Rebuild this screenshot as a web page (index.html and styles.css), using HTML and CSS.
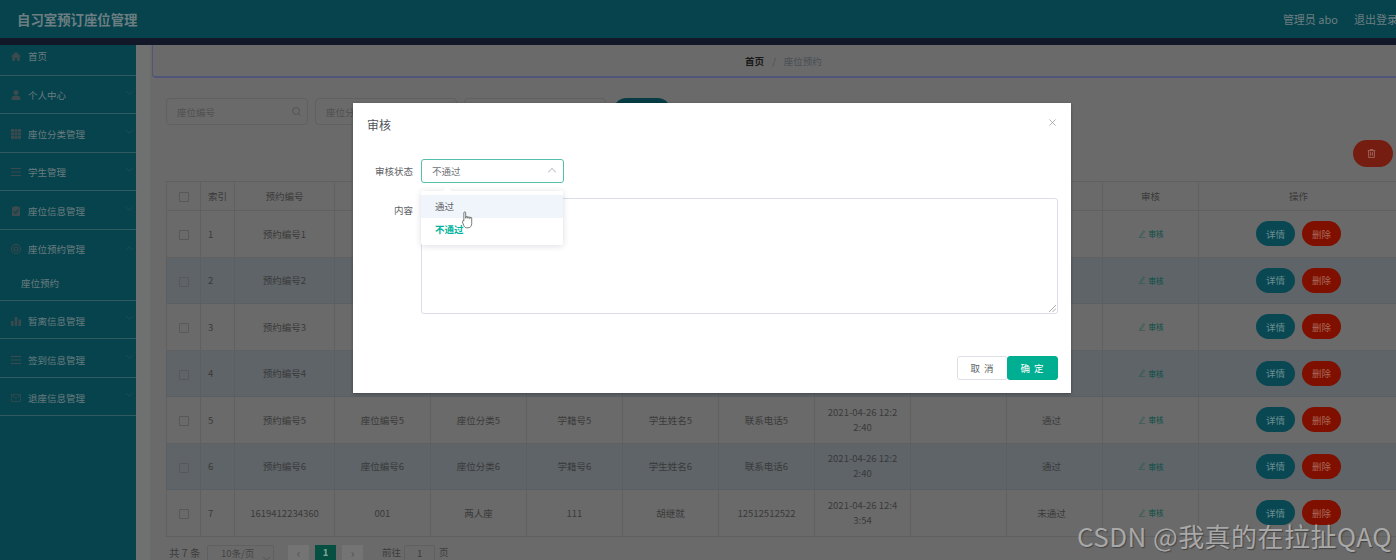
FILE: index.html
```html
<!DOCTYPE html>
<html lang="zh-CN">
<head>
    <meta charset="UTF-8">
    <title>自习室预订座位管理</title>
    <link rel="stylesheet" href="styles.css">
</head>
<body>
    <header class="top">
        <span class="brand">自习室预订座位管理</span>
        <div class="top-right">
            <span>管理员 abo</span>
            <span>退出登录</span>
        </div>
    </header>
    <div class="strip"></div>

    <div class="wrap">
        <nav class="side">
            <div class="item first">
                <svg class="ico" viewBox="0 0 10 10"><path d="M5 .8 0 5.400h1.300V10h2.600V7h2.200v3h2.600V5.400H10z"/></svg>
                首页
            </div>
            <div class="item">
                <svg class="ico" viewBox="0 0 10 10"><circle cx="5" cy="2.600" r="2.500"/><path d="M.6 10V8c0-1.800 1.800-2.600 4.400-2.600S9.400 6.200 9.400 8v2z"/></svg>
                个人中心<i class="chev"></i>
            </div>
            <div class="item">
                <svg class="ico" viewBox="0 0 10 10"><path d="M0 0h3v3H0zM3.500 0h3v3h-3zM7 0h3v3H7zM0 3.500h3v3H0zM3.500 3.500h3v3h-3zM7 3.500h3v3H7zM0 7h3v3H0zM3.500 7h3v3h-3zM7 7h3v3H7z"/></svg>
                座位分类管理<i class="chev"></i>
            </div>
            <div class="item">
                <svg class="ico" viewBox="0 0 10 10"><path d="M0 1h10v1H0zM0 4.500h10v1H0zM0 8h10v1H0z"/></svg>
                学生管理<i class="chev"></i>
            </div>
            <div class="item">
                <svg class="ico" viewBox="0 0 10 10"><path d="M1 1h2.500V0h3v1H9v9H1zM3 5l-.7.7L4.300 7.800l3.500-3.500-.7-.7-2.800 2.800z"/></svg>
                座位信息管理<i class="chev"></i>
            </div>
            <div class="item open">
                <svg class="ico" viewBox="0 0 10 10"><path fill-rule="evenodd" d="M5 0a5 5 0 1 1 0 10A5 5 0 0 1 5 0zm0 1a4 4 0 1 0 0 8 4 4 0 0 0 0-8zm0 1.500a2.500 2.500 0 1 1 0 5 2.500 2.500 0 0 1 0-5zm0 1a1.500 1.500 0 1 0 0 3 1.500 1.500 0 0 0 0-3z"/></svg>
                座位预约管理<i class="chev up"></i>
            </div>
            <div class="item sub">座位预约</div>
            <div class="item">
                <svg class="ico" viewBox="0 0 10 10"><path d="M0 5h2.500v5H0zM3.700 1h2.600v9H3.700zM7.500 3.500H10V10H7.500z"/></svg>
                暂离信息管理<i class="chev"></i>
            </div>
            <div class="item">
                <svg class="ico" viewBox="0 0 10 10"><path d="M0 1h10v1H0zM0 4.500h10v1H0zM0 8h10v1H0z"/></svg>
                签到信息管理<i class="chev"></i>
            </div>
            <div class="item">
                <svg class="ico" viewBox="0 0 10 10"><path fill="none" stroke="#3a4a4e" stroke-width=".8" d="M.4 1.400h9.200v7.200H.4zM.6 1.800 5 5.500l4.400-3.700"/></svg>
                退座信息管理<i class="chev"></i>
            </div>
        </nav>

        <main class="content">
            <div class="crumb">
                <b>首页</b><span class="sep">/</span><span class="cur">座位预约</span>
            </div>

            <div class="search">
                <div class="field">座位编号
                    <svg class="mag" viewBox="0 0 10 10"><circle cx="4.500" cy="4.500" r="3.800"/><path d="m7.300 7.300 2.200 2.200"/></svg>
                </div>
                <div class="field">座位分类</div>
                <div class="field">学籍号</div>
                <div class="find"></div>
            </div>

            <div class="tools">
                <button class="trash">
                    <svg viewBox="0 0 10 10"><path d="M.8 1.800h8.400M3.500 1.800V.6h3v1.200M1.800 1.800v7.600h6.400V1.800M4 3.500v4M6 3.500v4"/></svg>
                </button>
            </div>

            <table class="grid">
                <colgroup>
                    <col class="c-check"><col class="c-index"><col class="c-first"><col class="c-n"><col class="c-n"><col class="c-n">
                    <col class="c-n"><col class="c-n"><col class="c-n"><col class="c-n"><col class="c-n"><col class="c-n"><col class="c-op">
                </colgroup>
                <thead>
                    <tr>
                        <th><i class="box"></i></th><th class="idx">索引</th><th>预约编号</th><th>座位编号</th><th>座位分类</th><th>学籍号</th>
                        <th>学生姓名</th><th>联系电话</th><th>预约时间</th><th>审核回复</th><th class="state">审核状态</th><th>审核</th><th>操作</th>
                    </tr>
                </thead>
                <tbody>
                    <tr>
                        <td><i class="box"></i></td><td class="idx">1</td><td>预约编号1</td><td>座位编号1</td><td>座位分类1</td><td>学籍号1</td>
                        <td>学生姓名1</td><td>联系电话1</td><td class="time">2021-04-26 12:22:40</td><td></td><td class="state">通过</td>
                        <td><a class="check"><svg viewBox="0 0 10 10"><path d="M7 .8 3 6.500 2.500 8.500 4.300 7.500 8.200 2zM1 9.500h8"/></svg>审核</a></td>
                        <td><button class="pill view">详情</button><button class="pill del">删除</button></td>
                    </tr>
                    <tr>
                        <td><i class="box"></i></td><td class="idx">2</td><td>预约编号2</td><td>座位编号2</td><td>座位分类2</td><td>学籍号2</td>
                        <td>学生姓名2</td><td>联系电话2</td><td class="time">2021-04-26 12:22:40</td><td></td><td class="state">通过</td>
                        <td><a class="check"><svg viewBox="0 0 10 10"><path d="M7 .8 3 6.500 2.500 8.500 4.300 7.500 8.200 2zM1 9.500h8"/></svg>审核</a></td>
                        <td><button class="pill view">详情</button><button class="pill del">删除</button></td>
                    </tr>
                    <tr>
                        <td><i class="box"></i></td><td class="idx">3</td><td>预约编号3</td><td>座位编号3</td><td>座位分类3</td><td>学籍号3</td>
                        <td>学生姓名3</td><td>联系电话3</td><td class="time">2021-04-26 12:22:40</td><td></td><td class="state">通过</td>
                        <td><a class="check"><svg viewBox="0 0 10 10"><path d="M7 .8 3 6.500 2.500 8.500 4.300 7.500 8.200 2zM1 9.500h8"/></svg>审核</a></td>
                        <td><button class="pill view">详情</button><button class="pill del">删除</button></td>
                    </tr>
                    <tr>
                        <td><i class="box"></i></td><td class="idx">4</td><td>预约编号4</td><td>座位编号4</td><td>座位分类4</td><td>学籍号4</td>
                        <td>学生姓名4</td><td>联系电话4</td><td class="time">2021-04-26 12:22:40</td><td></td><td class="state">通过</td>
                        <td><a class="check"><svg viewBox="0 0 10 10"><path d="M7 .8 3 6.500 2.500 8.500 4.300 7.500 8.200 2zM1 9.500h8"/></svg>审核</a></td>
                        <td><button class="pill view">详情</button><button class="pill del">删除</button></td>
                    </tr>
                    <tr>
                        <td><i class="box"></i></td><td class="idx">5</td><td>预约编号5</td><td>座位编号5</td><td>座位分类5</td><td>学籍号5</td>
                        <td>学生姓名5</td><td>联系电话5</td><td class="time">2021-04-26 12:22:40</td><td></td><td class="state">通过</td>
                        <td><a class="check"><svg viewBox="0 0 10 10"><path d="M7 .8 3 6.500 2.500 8.500 4.300 7.500 8.200 2zM1 9.500h8"/></svg>审核</a></td>
                        <td><button class="pill view">详情</button><button class="pill del">删除</button></td>
                    </tr>
                    <tr>
                        <td><i class="box"></i></td><td class="idx">6</td><td>预约编号6</td><td>座位编号6</td><td>座位分类6</td><td>学籍号6</td>
                        <td>学生姓名6</td><td>联系电话6</td><td class="time">2021-04-26 12:22:40</td><td></td><td class="state">通过</td>
                        <td><a class="check"><svg viewBox="0 0 10 10"><path d="M7 .8 3 6.500 2.500 8.500 4.300 7.500 8.200 2zM1 9.500h8"/></svg>审核</a></td>
                        <td><button class="pill view">详情</button><button class="pill del">删除</button></td>
                    </tr>
                    <tr>
                        <td><i class="box"></i></td><td class="idx">7</td><td>1619412234360</td><td>001</td><td>两人座</td><td>111</td>
                        <td>胡继就</td><td>12512512522</td><td class="time">2021-04-26 12:43:54</td><td></td><td class="state">未通过</td>
                        <td><a class="check"><svg viewBox="0 0 10 10"><path d="M7 .8 3 6.500 2.500 8.500 4.300 7.500 8.200 2zM1 9.500h8"/></svg>审核</a></td>
                        <td><button class="pill view">详情</button><button class="pill del">删除</button></td>
                    </tr>
                </tbody>
            </table>

            <div class="pager">
                <span class="total">共 7 条</span>
                <div class="size">10条/页<i class="chev"></i></div>
                <span class="step">&#8249;</span>
                <span class="num">1</span>
                <span class="step">&#8250;</span>
                <span class="goto">前往</span>
                <span class="jump">1</span>
                <span>页</span>
            </div>
        </main>
    </div>

    <!-- 审核弹窗 -->
    <div class="dialog">
        <div class="dialog-head">
            <span>审核</span>
            <svg class="close" viewBox="0 0 8 8"><path d="m.5.5 7 7M7.500.5l-7 7"/></svg>
        </div>
        <div class="row">
            <label>审核状态</label>
            <div class="select">不通过<i class="chev up"></i></div>
        </div>
        <div class="row">
            <label>内容</label>
            <div class="area">
                <svg class="grip" viewBox="0 0 7 7"><path d="M7 0 0 7M7 3.500 3.500 7"/></svg>
            </div>
        </div>
        <div class="dialog-foot">
            <button class="btn">取 消</button>
            <button class="btn ok">确 定</button>
        </div>

        <div class="drop">
            <div class="opt hover">通过</div>
            <div class="opt on">不通过</div>
        </div>
        <svg class="hand" viewBox="0 0 12 18"><path d="M2 1.200a1 1 0 0 1 2 0V7h.5V6a.9.9 0 0 1 1.800 0v1h.4v-.6a.9.9 0 0 1 1.800 0v1.100h.3V7a.9.9 0 0 1 1.800 0v6c0 2.500-1.500 4.500-4 4.500H5c-1.500 0-2.400-1-3-2.200L.4 11c-.4-1 .9-1.800 1.600-.8z"/></svg>
    </div>

    <div class="mark">CSDN @我真的在拉扯QAQ</div>
</body>
</html>
```

FILE: styles.css
```css
*{
    margin: 0;
    padding: 0;
    box-sizing: border-box;
}
html, body{
    height: 560px;
    overflow: hidden;
}
body{
    position: relative;
    background-color: #6a6a6a;
    color: #3a3a3a;
    font-family: "Noto Sans CJK SC", "Noto Sans", sans-serif;
    font-size: 9.5px;
}

/* top bar */
.top{
    height: 38px;
    background-color: #07434c;
    display: flex;
    align-items: center;
    justify-content: space-between;
    padding: 0 0 0 17px;
    color: #6c7e82;
}
.brand{
    font-size: 13.4px;
    font-weight: bold;
    margin-top: -1px;
}
.top-right{
    display: flex;
    gap: 16px;
    font-size: 11px;
    margin-right: -2px;
    white-space: nowrap;
}
.strip{
    height: 7px;
    background-color: #121828;
}
.wrap{
    display: flex;
    height: 515px;
}

/* sidebar */
.side{
    flex: 0 0 136px;
    background-color: #07434c;
    color: #6a7c80;
}
.item{
    height: 38.5px;
    display: flex;
    align-items: center;
    gap: 7px;
    padding-left: 11px;
    padding-top: 2px;
    border-bottom: 1px solid #2e5a60;
    position: relative;
}
.item.first{
    height: 30.500px;
    padding-top: 0;
    padding-bottom: 7px;
}
.item.open{
    border-bottom: none;
    height: 38px;
    padding-top: 0;
}
.item.sub{
    height: 33px;
    padding-top: 0;
    padding-left: 21px;
    padding-bottom: 2px;
}
.sub ~ .item{
    padding-top: 4px;
}
.ico{
    width: 10px;
    height: 10px;
    fill: #3a4a4e;
    flex: none;
}
.chev{
    position: absolute;
    right: 4px;
    top: 50%;
    width: 5px;
    height: 5px;
    margin-top: -5px;
    border-right: 1px solid #174c54;
    border-bottom: 1px solid #174c54;
    transform: rotate(45deg);
}
.chev.up{
    margin-top: -2px;
    transform: rotate(225deg);
}

/* content */
.content{
    flex: 1;
    min-width: 0;
    padding: 0 0 0 16px;
    background: linear-gradient(to right, #6e7170 14px, #6a6a6a 14px);
}
.crumb{
    height: 33px;
    background-color: #6a6a6a;
    border-left: 1px solid #50557a;
    border-bottom: 2px solid #50557a;
    border-bottom-left-radius: 4px;
    display: flex;
    align-items: center;
    justify-content: center;
    gap: 8px;
    padding-left: 18px;
    color: #484f54;
}
.crumb b{
    color: #181818;
}
.sep{
    color: #505050;
}
.search{
    display: flex;
    gap: 7px;
    margin: 20px 0 0 14px;
    height: 27px;
}
.field{
    width: 142px;
    border: 1px solid #606060;
    border-radius: 4px;
    padding-left: 10px;
    display: flex;
    align-items: center;
    justify-content: space-between;
    color: #505050;
    white-space: nowrap;
}
.mag{
    width: 9px;
    height: 9px;
    margin-right: 6px;
    fill: none;
    stroke: #505050;
    stroke-width: 1;
}
.find{
    width: 58px;
    height: 27px;
    background-color: #073c45;
    border-radius: 14px;
}
.tools{
    display: flex;
    justify-content: flex-end;
    margin-top: 15px;
    padding-right: 3px;
}
.trash{
    width: 40px;
    height: 27px;
    border: none;
    border-radius: 14px;
    background-color: #761d12;
    display: flex;
    align-items: center;
    justify-content: center;
}
.trash svg{
    width: 9px;
    height: 9px;
    fill: none;
    stroke: #a06a60;
    stroke-width: 1;
    margin-right: 3px;
}

/* table */
.grid{
    width: 1232px;
    margin: 14px 0 0 14px;
    table-layout: fixed;
    border-collapse: collapse;
}
.c-check, .c-index{
    width: 34px;
}
.c-first{
    width: 100px;
}
.c-n{
    width: 96px;
}
.c-op{
    width: 200px;
}
th, td{
    border: 1px solid #606060;
    text-align: center;
    font-weight: normal;
}
th{
    height: 29px;
}
td{
    height: 46.500px;
}
tbody tr:nth-child(even){
    background-color: #5e6468;
}
tbody tr:nth-child(even) td{
    border-color: #595f63;
}
th.idx, td.idx{
    text-align: left;
    padding-left: 7px;
}
th.state, td.state{
    padding-right: 6px;
}
.box{
    display: inline-block;
    width: 10px;
    height: 10px;
    border: 1px solid #585858;
    border-radius: 1px;
    vertical-align: middle;
}
.time{
    padding: 0 10px;
    word-break: break-all;
    line-height: 15px;
}
.check{
    color: #084e45;
    font-size: 7.500px;
    display: inline-flex;
    align-items: center;
    gap: 3px;
}
.check svg{
    width: 8px;
    height: 8px;
    fill: none;
    stroke: #2a5a52;
    stroke-width: .8;
}
.pill{
    width: 39px;
    height: 25px;
    border: none;
    border-radius: 13px;
    font-family: inherit;
    font-size: 9.500px;
}
.pill.view{
    background-color: #094852;
    color: #6c8e92;
    margin-right: 7px;
}
.pill.del{
    background-color: #7f1000;
    color: #a86858;
}

/* pager */
.pager{
    display: flex;
    align-items: flex-start;
    margin: 8px 0 0 17px;
    height: 28px;
    line-height: 15px;
    color: #3c3c3c;
}
.total{
    width: 38px;
    font-size: 10.500px;
}
.size{
    position: relative;
    width: 67px;
    height: 24px;
    border: 1px solid #606060;
    border-radius: 2px;
    padding-left: 13px;
    color: #444;
    margin-right: 14px;
}
.size .chev{
    border-color: #5a5a5a;
    top: 9px;
    margin-top: 0;
}
.step{
    width: 21px;
    height: 24px;
    background-color: #747474;
    color: #525252;
    text-align: center;
    font-size: 12px;
    margin-right: 6px;
}
.num{
    width: 21px;
    height: 24px;
    background-color: #065041;
    color: #80a49c;
    font-weight: bold;
    text-align: center;
    margin-right: 6px;
}
.goto{
    margin-left: 13px;
    margin-right: 3px;
}
.jump{
    width: 31px;
    height: 24px;
    border: 1px solid #606060;
    border-radius: 2px;
    text-align: center;
    margin-right: 4px;
}

/* dialog */
.dialog{
    position: absolute;
    left: 353px;
    top: 103px;
    width: 718px;
    height: 290px;
    background-color: #fff;
    box-shadow: 0 1px 3px rgba(0, 0, 0, .3);
    color: #606266;
}
.dialog-head{
    height: 56px;
    padding: 13px 14px 0;
    display: flex;
    justify-content: space-between;
    align-items: flex-start;
    font-size: 12px;
    color: #50525a;
}
.close{
    width: 7px;
    height: 7px;
    margin: 3px 1px 0 0;
    stroke: #909399;
    stroke-width: .8;
    fill: none;
}
.row{
    display: flex;
    margin-bottom: 15px;
    padding-right: 13px;
}
.row label{
    width: 60px;
    margin-right: 8px;
    flex: none;
    text-align: right;
    line-height: 24px;
}
.select{
    position: relative;
    width: 143px;
    height: 24px;
    border: 1px solid #55bfae;
    border-radius: 3px;
    padding-left: 10px;
    line-height: 22px;
    color: #6e7176;
}
.select .chev{
    right: 8px;
    border-color: #c6c9d0;
    width: 6px;
    height: 6px;
}
.area{
    position: relative;
    flex: 1;
    height: 116px;
    border: 1px solid #dcdcec;
    border-radius: 3px;
}
.grip{
    position: absolute;
    right: 1px;
    bottom: 1px;
    width: 7px;
    height: 7px;
    stroke: #888;
    stroke-width: .7;
}
.dialog-foot{
    display: flex;
    justify-content: flex-end;
    padding: 27px 13px 0 0;
}
.btn{
    width: 51px;
    height: 24px;
    background-color: #fff;
    border: 1px solid #dcdfe6;
    border-radius: 3px;
    font-family: inherit;
    font-size: 9.500px;
    color: #606266;
    letter-spacing: 1px;
}
.btn.ok{
    margin-left: -1px;
    background-color: #00ae92;
    border-color: #00ae92;
    color: #fff;
}

/* dropdown and pointer lie over the form */
.drop{
    position: absolute;
    left: 68px;
    top: 88px;
    width: 142px;
    height: 54px;
    padding: 4px 0;
    background-color: #fff;
    border-radius: 2px;
    box-shadow: 0 1px 6px rgba(60, 60, 110, .18);
}
.drop::before{
    content: "";
    position: absolute;
    left: 23px;
    top: -3px;
    width: 6px;
    height: 6px;
    background-color: #fff;
    transform: rotate(45deg);
}
.opt{
    position: relative;
    height: 23px;
    padding-left: 14px;
    line-height: 23px;
}
.opt.hover{
    background-color: #f0f5fc;
}
.opt.on{
    color: #00b39a;
    font-weight: bold;
}
.hand{
    position: absolute;
    left: 109px;
    top: 108px;
    width: 11px;
    height: 18px;
    fill: #fff;
    stroke: #4a4a4a;
    stroke-width: .8;
}

/* watermark */
.mark{
    position: absolute;
    right: 4px;
    bottom: 6px;
    font-size: 26px;
    line-height: 36px;
    letter-spacing: .45px;
    color: #a8a8a8;
    text-shadow: 1px 1px 1px #444;
    white-space: nowrap;
}
```
